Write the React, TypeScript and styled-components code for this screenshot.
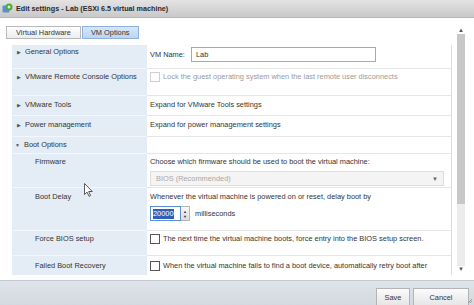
import React from 'react';
import styled, { createGlobalStyle } from 'styled-components';

const Global = createGlobalStyle`
  html, body { margin: 0; padding: 0; background: #fff; }
  body { font-family: "Liberation Sans", Arial, sans-serif; font-size: 7.4px; color: #333; }
`;

const Dialog = styled.div`
  width: 474px;
  height: 305px;
  display: flex;
  flex-direction: column;
  background: #fff;
  overflow: hidden;
  position: relative;
`;

const TitleBar = styled.div`
  height: 17px;
  display: flex;
  align-items: center;
  gap: 3px;
  padding-left: 2px;
  background: linear-gradient(#e3e3e3, #c9c9c9);
  border-bottom: 1px solid #b5b5b5;
  font-weight: bold;
  font-size: 7.2px;
  color: #2a2a2a;
`;

const Body = styled.div`
  flex: 1;
  display: flex;
  min-height: 0;
`;

const Main = styled.div`
  flex: 1;
  display: flex;
  flex-direction: column;
  padding-left: 6px;
  min-width: 0;
`;

const Tabs = styled.div`
  display: flex;
  margin-top: 8px;
  height: 13px;
`;

const Tab = styled.div<{ $active?: boolean }>`
  display: flex;
  align-items: center;
  padding: 0 ${p => (p.$active ? '8px' : '9px')};
  border: 1px solid ${p => (p.$active ? '#8fb2dc' : '#b9b9b9')};
  background: ${p => (p.$active ? 'linear-gradient(#d7e6f8, #bcd4f2)' : 'linear-gradient(#ffffff, #ececec)')};
  color: #333;
  margin-right: ${p => (p.$active ? '0' : '1px')};
`;

const Viewport = styled.div`
  margin-top: 6px;
  margin-left: 6px;
  height: 230px;
  overflow: hidden;
  border-right: 1px solid #dcdcdc;
  width: 439px;
`;

const Row = styled.div<{ $h: number }>`
  display: grid;
  grid-template-columns: 135px 1fr;
  height: ${p => p.$h}px;
  flex-shrink: 0;
`;

const Label = styled.div<{ $pt: number; $indent?: number }>`
  background: #e4edf6;
  border-bottom: 1px solid #f3f7fb;
  padding-top: ${p => p.$pt}px;
  padding-left: ${p => p.$indent ?? 5}px;
  line-height: 12px;
  color: #333;
  display: flex;
  align-items: flex-start;
  gap: 4px;
`;

const Arrow = styled.span`
  font-size: 5px;
  color: #555;
  line-height: 12px;
`;

const Cell = styled.div<{ $pt: number }>`
  border-bottom: 1px solid #e6e6e6;
  padding: ${p => p.$pt}px 0 0 3px;
  line-height: 12px;
  color: #333;
  display: flex;
  flex-direction: column;
  gap: 3px;
  white-space: nowrap;
`;

const Line = styled.div<{ $muted?: boolean }>`
  display: flex;
  align-items: center;
  gap: 3px;
  color: ${p => (p.$muted ? '#9a9a9a' : '#333')};
`;

const TextInput = styled.div`
  width: 179px;
  height: 13px;
  border: 1px solid #a9a9a9;
  padding-left: 4px;
  display: flex;
  align-items: center;
  margin-left: 3px;
  background: #fff;
`;

const Select = styled.div`
  width: 294px;
  height: 15px;
  border: 1px solid #dedede;
  background: #f4f4f4;
  color: #a8a8a8;
  display: flex;
  align-items: center;
  justify-content: space-between;
  padding: 0 5px;
  box-sizing: border-box;
`;

const Caret = styled.span`
  font-size: 6px;
  color: #666;
`;

const Check = styled.span<{ $disabled?: boolean }>`
  width: 8px;
  height: 8px;
  border: 1px solid ${p => (p.$disabled ? '#cfcfcf' : '#555')};
  background: #fff;
  flex-shrink: 0;
`;

const Spin = styled.div`
  display: flex;
  align-items: center;
`;

const SpinBox = styled.div`
  width: 27px;
  height: 13px;
  border: 1px solid #5b8fd6;
  display: flex;
  align-items: center;
  padding-left: 2px;
  background: #fff;
`;

const Selected = styled.span`
  background: #2f5fb8;
  color: #fff;
  line-height: 10px;
`;

const SpinButtons = styled.div`
  width: 8px;
  height: 13px;
  border: 1px solid #b5b5b5;
  border-left: none;
  background: linear-gradient(#f7f7f7, #dcdcdc);
  display: flex;
  flex-direction: column;
  align-items: center;
  justify-content: center;
  font-size: 4px;
  line-height: 5px;
  color: #333;
  margin-right: 5px;
`;

const Scrollbar = styled.div`
  width: 8px;
  margin: 9px 9px 7px 0;
  display: flex;
  flex-direction: column;
  align-items: center;
`;

const ScrollArrow = styled.div`
  height: 7px;
  font-size: 6px;
  line-height: 7px;
  color: #555;
`;

const Track = styled.div`
  flex: 1;
  width: 8px;
  background: #ececec;
  display: flex;
  flex-direction: column;
`;

const Thumb = styled.div`
  height: 170px;
  background: #c8c8c8;
`;

const Footer = styled.div`
  height: 24px;
  background: linear-gradient(#dfe4ea, #d3d9e0);
  border-top: 1px solid #c4cad1;
  display: flex;
  justify-content: flex-end;
  align-items: flex-end;
  gap: 3px;
  padding-right: 5px;
`;

const Button = styled.div<{ $w: number }>`
  width: ${p => p.$w}px;
  height: 16px;
  border: 1px solid #b4b4b4;
  border-bottom: none;
  background: linear-gradient(#fbfbfb, #e6e6e6);
  display: flex;
  align-items: center;
  justify-content: center;
  color: #333;
`;

const Pointer = styled.svg`
  position: absolute;
  left: 84px;
  top: 183px;
`;

const Grip = styled.svg`
  position: absolute;
  right: 1px;
  bottom: 1px;
`;

const App = () => {
  return (
    <Dialog>
      <Global />
      <TitleBar>
        <svg width="11" height="11" viewBox="0 0 11 11">
          <rect x="0.5" y="2.5" width="7" height="7" rx="1" fill="#5d8fcf" />
          <circle cx="7" cy="4" r="3.5" fill="#4caa3a" />
          <path d="M5.5 4h3M7 2.5v3" stroke="#fff" strokeWidth="1.2" />
        </svg>
        Edit settings - Lab (ESXi 6.5 virtual machine)
      </TitleBar>
      <Body>
        <Main>
          <Tabs>
            <Tab>Virtual Hardware</Tab>
            <Tab $active>VM Options</Tab>
          </Tabs>
          <Viewport>
            <Row $h={24}>
              <Label $pt={1}><Arrow>▶</Arrow>General Options</Label>
              <Cell $pt={2}>
                <Line>VM Name: <TextInput>Lab</TextInput></Line>
              </Cell>
            </Row>
            <Row $h={27}>
              <Label $pt={2}><Arrow>▶</Arrow>VMware Remote Console Options</Label>
              <Cell $pt={2}>
                <Line $muted><Check $disabled />Lock the guest operating system when the last remote user disconnects</Line>
              </Cell>
            </Row>
            <Row $h={20}>
              <Label $pt={3}><Arrow>▶</Arrow>VMware Tools</Label>
              <Cell $pt={3}>Expand for VMware Tools settings</Cell>
            </Row>
            <Row $h={21}>
              <Label $pt={3}><Arrow>▶</Arrow>Power management</Label>
              <Cell $pt={3}>Expand for power management settings</Cell>
            </Row>
            <Row $h={17}>
              <Label $pt={2} $indent={3}><Arrow>▼</Arrow>Boot Options</Label>
              <Cell $pt={2} />
            </Row>
            <Row $h={34}>
              <Label $pt={2} $indent={23}>Firmware</Label>
              <Cell $pt={2}>
                <Line>Choose which firmware should be used to boot the virtual machine:</Line>
                <Select>BIOS (Recommended)<Caret>▼</Caret></Select>
              </Cell>
            </Row>
            <Row $h={43}>
              <Label $pt={3} $indent={23}>Boot Delay</Label>
              <Cell $pt={3}>
                <Line>Whenever the virtual machine is powered on or reset, delay boot by</Line>
                <Spin>
                  <SpinBox><Selected>20000</Selected></SpinBox>
                  <SpinButtons><span>▲</span><span>▼</span></SpinButtons>
                  milliseconds
                </Spin>
              </Cell>
            </Row>
            <Row $h={25}>
              <Label $pt={2} $indent={23}>Force BIOS setup</Label>
              <Cell $pt={2}>
                <Line><Check />The next time the virtual machine boots, force entry into the BIOS setup screen.</Line>
              </Cell>
            </Row>
            <Row $h={40}>
              <Label $pt={4} $indent={23}>Failed Boot Recovery</Label>
              <Cell $pt={4}>
                <Line><Check />When the virtual machine fails to find a boot device, automatically retry boot after</Line>
              </Cell>
            </Row>
          </Viewport>
        </Main>
        <Scrollbar>
          <ScrollArrow>▲</ScrollArrow>
          <Track><Thumb /></Track>
          <ScrollArrow>▼</ScrollArrow>
        </Scrollbar>
      </Body>
      <Footer>
        <Button $w={32}>Save</Button>
        <Button $w={54}>Cancel</Button>
      </Footer>
      <Pointer width="9" height="14" viewBox="0 0 9 14">
        <path d="M0.5 0.5v11l2.6-2.4 1.9 4.2 1.6-0.7-1.9-4.1h3.6z" fill="#fff" stroke="#333" strokeWidth="0.8" />
      </Pointer>
      <Grip width="6" height="6" viewBox="0 0 6 6">
        <path d="M5 1L1 5M5 3L3 5" stroke="#8a8a8a" strokeWidth="0.8" />
      </Grip>
    </Dialog>
  );
};

export default App;
